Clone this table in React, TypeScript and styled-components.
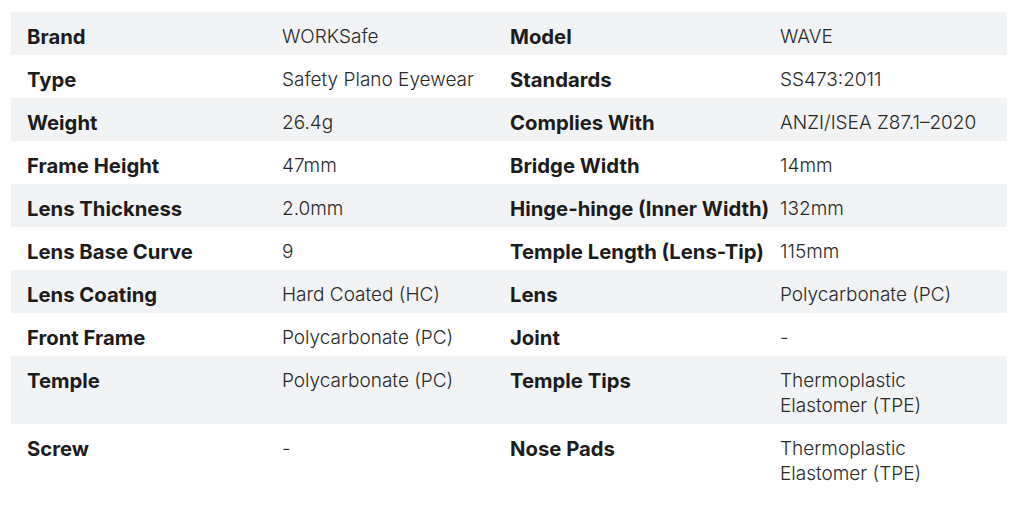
import styled, { createGlobalStyle } from "styled-components";

const GlobalStyle = createGlobalStyle`
  html, body {
    margin: 0;
    padding: 0;
    background: #ffffff;
  }
  body {
    font-family: Inter, "Noto Sans", "DejaVu Sans", sans-serif;
  }
`;

const Page = styled.div`
  padding: 12px 17px 0 11px;
`;

const SpecTable = styled.div`
  width: 996px;
  display: flex;
  flex-direction: column;
`;

const Row = styled.div<{ $shaded: boolean }>`
  display: grid;
  grid-template-columns: 255px 228px 270px 243px;
  background: ${(p) => (p.$shaded ? "#f2f3f4" : "#ffffff")};
`;

const Label = styled.div`
  padding: 12px 16px 6px;
  font-size: 20.3px;
  line-height: 25px;
  font-weight: 700;
  color: #1c1c1c;
  white-space: nowrap;
`;

const Value = styled.div`
  padding: 12px 16px 6px;
  font-size: 19px;
  line-height: 25px;
  font-weight: 300;
  color: #2a2a2a;
`;

type Spec = [string, string, string, string];

const specs: Spec[] = [
  ["Brand", "WORKSafe", "Model", "WAVE"],
  ["Type", "Safety Plano Eyewear", "Standards", "SS473:2011"],
  ["Weight", "26.4g", "Complies With", "ANZI/ISEA Z87.1–2020"],
  ["Frame Height", "47mm", "Bridge Width", "14mm"],
  ["Lens Thickness", "2.0mm", "Hinge-hinge (Inner Width)", "132mm"],
  ["Lens Base Curve", "9", "Temple Length (Lens-Tip)", "115mm"],
  ["Lens Coating", "Hard Coated (HC)", "Lens", "Polycarbonate (PC)"],
  ["Front Frame", "Polycarbonate (PC)", "Joint", "-"],
  ["Temple", "Polycarbonate (PC)", "Temple Tips", "Thermoplastic Elastomer (TPE)"],
  ["Screw", "-", "Nose Pads", "Thermoplastic Elastomer (TPE)"],
];

const App = () => {
  return (
    <Page>
      <GlobalStyle />
      <SpecTable>
        {specs.map(([l1, v1, l2, v2], i) => (
          <Row key={l1} $shaded={i % 2 === 0}>
            <Label>{l1}</Label>
            <Value>{v1}</Value>
            <Label>{l2}</Label>
            <Value>{v2}</Value>
          </Row>
        ))}
      </SpecTable>
    </Page>
  );
};

export default App;
